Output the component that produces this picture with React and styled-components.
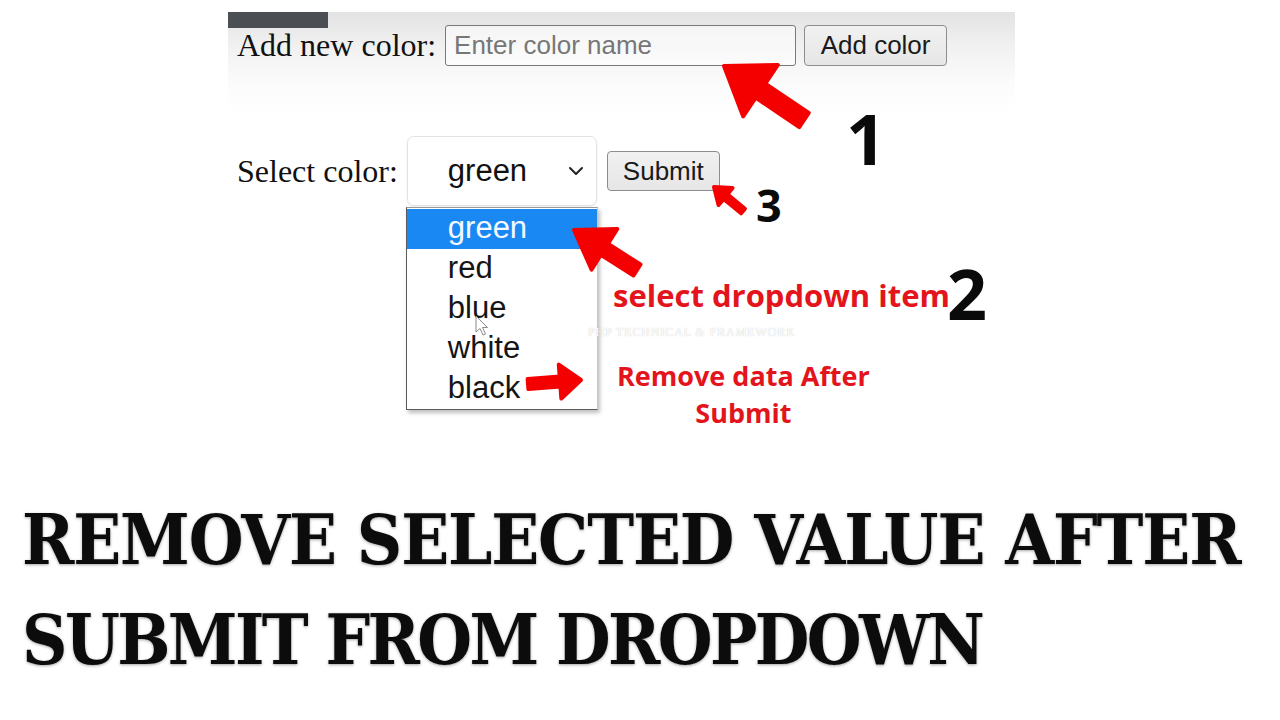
import React from "react";
import styled, { createGlobalStyle } from "styled-components";

const Global = createGlobalStyle`
  html, body { margin: 0; padding: 0; background: #fff; }
  body { width: 1280px; height: 720px; overflow: hidden; }
`;

const Page = styled.div`
  position: relative;
  width: 1280px;
  height: 720px;
  display: flex;
  flex-direction: column;
`;

const Screen = styled.div`
  position: relative;
  margin: 12px 0 0 228px;
  width: 787px;
  height: 414px;
  background: linear-gradient(180deg, #e3e3e3 0px, #f1f1f1 35px, #fbfbfb 70px, #fff 100px);
  box-sizing: border-box;
  padding: 13px 0 0 9px;
  display: flex;
  flex-direction: column;
`;

const TabBar = styled.div`
  position: absolute;
  left: 0;
  top: 0;
  width: 100px;
  height: 16px;
  background: #4b4e53;
`;

const Row = styled.div`
  display: flex;
  align-items: center;
  margin-top: ${(p) => p.$mt || 0}px;
`;

const Label = styled.span`
  font-family: "Liberation Serif", "Times New Roman", serif;
  font-size: 32px;
  color: #111;
  margin-right: ${(p) => p.$gap}px;
  white-space: nowrap;
`;

const TextInput = styled.input`
  box-sizing: border-box;
  width: 351px;
  height: 41px;
  border: 1px solid #7a7a7a;
  border-radius: 3px;
  background: rgba(255, 255, 255, 0.55);
  padding: 0 8px;
  font-family: "Liberation Sans", Arial, sans-serif;
  font-size: 26px;
  color: #111;
  outline: none;
  &::placeholder { color: #777; }
`;

const Button = styled.button`
  box-sizing: border-box;
  width: ${(p) => p.$w}px;
  height: ${(p) => p.$h}px;
  margin-left: ${(p) => p.$ml}px;
  border: 1px solid #8d8d8d;
  border-radius: 4px;
  background: linear-gradient(#f1f1f1, #e6e6e6);
  font-family: "Liberation Sans", Arial, sans-serif;
  font-size: 26px;
  color: #1a1a1a;
  padding: 0;
`;

const SelectWrap = styled.div`
  position: relative;
  width: 190px;
  height: 70px;
`;

const SelectBox = styled.div`
  box-sizing: border-box;
  width: 100%;
  height: 100%;
  border: 1px solid #e2e2e2;
  border-radius: 7px;
  background: #fff;
  box-shadow: 0 1px 3px rgba(0, 0, 0, 0.06);
  display: flex;
  align-items: center;
  padding: 0 12px 0 40px;
  font-family: "Liberation Sans", Arial, sans-serif;
  font-size: 31px;
  color: #111;
`;

const SelectValue = styled.span`
  flex: 1;
`;

const Menu = styled.ul`
  position: absolute;
  left: -1px;
  top: 71px;
  width: 192px;
  margin: 0;
  padding: 1px 0 0;
  list-style: none;
  background: #fff;
  border: 1px solid #5c5c5c;
  border-top-color: #9a9a9a;
  border-right-color: #c8c8c8;
  box-sizing: border-box;
  box-shadow: 2px 3px 4px rgba(0, 0, 0, 0.25);
`;

const Option = styled.li`
  height: 40px;
  line-height: 38px;
  padding-left: 41px;
  font-family: "Liberation Sans", Arial, sans-serif;
  font-size: 31px;
  color: ${(p) => (p.$active ? "#f4f8ff" : "#151515")};
  background: ${(p) => (p.$active ? "#1a88f3" : "transparent")};
`;

const Overlay = styled.svg`
  position: absolute;
  left: 0;
  top: 0;
  pointer-events: none;
`;

const Note = styled.div`
  position: absolute;
  left: ${(p) => p.$x}px;
  top: ${(p) => p.$y}px;
  font-family: "Open Sans", "Noto Sans", sans-serif;
  font-weight: 700;
  font-size: ${(p) => p.$size}px;
  line-height: ${(p) => p.$lh || 1.2};
  color: ${(p) => p.$color};
  text-align: center;
  white-space: nowrap;
`;

const Watermark = styled.div`
  position: absolute;
  left: 588px;
  top: 325px;
  font-family: "Liberation Serif", serif;
  font-size: 12px;
  letter-spacing: 0.9px;
  color: #fff;
  text-shadow: 0 0 1px rgba(120, 120, 120, 0.5);
  white-space: nowrap;
`;

const Title = styled.h1`
  margin: 64px 0 0 22px;
  font-family: "DejaVu Serif Condensed", "DejaVu Serif", serif;
  font-stretch: condensed;
  font-weight: 700;
  font-size: 70px;
  line-height: 100px;
  color: #0c0c0c;
  text-shadow: 0 1px 3px rgba(0, 0, 0, 0.35);
  white-space: nowrap;
  display: flex;
  flex-direction: column;
`;

const TitleLine = styled.span`
  letter-spacing: ${(p) => p.$ls}px;
`;

function arrowPoints(tail, tip, w, hw, hl) {
  const dx = tip[0] - tail[0];
  const dy = tip[1] - tail[1];
  const len = Math.hypot(dx, dy);
  const ux = dx / len, uy = dy / len;
  const nx = -uy, ny = ux;
  const bx = tip[0] - ux * hl, by = tip[1] - uy * hl;
  const pts = [
    [tail[0] + nx * w / 2, tail[1] + ny * w / 2],
    [bx + nx * w / 2, by + ny * w / 2],
    [bx + nx * hw / 2, by + ny * hw / 2],
    tip,
    [bx - nx * hw / 2, by - ny * hw / 2],
    [bx - nx * w / 2, by - ny * w / 2],
    [tail[0] - nx * w / 2, tail[1] - ny * w / 2],
  ];
  return pts.map((p) => p.join(",")).join(" ");
}

const arrows = [
  { tail: [804, 120], tip: [724, 66], w: 17, hw: 62, hl: 44 },
  { tail: [637, 270], tip: [574, 230], w: 13, hw: 48, hl: 36 },
  { tail: [743, 211], tip: [714, 187], w: 6, hw: 22, hl: 15 },
  { tail: [528, 384], tip: [581, 380], w: 10, hw: 34, hl: 21 },
];

export default function App() {
  return (
    <Page>
      <Global />
      <Screen>
        <TabBar />
        <Row>
          <Label $gap={9}>Add new color:</Label>
          <TextInput placeholder="Enter color name" />
          <Button $w={143} $h={41} $ml={8}>Add color</Button>
        </Row>
        <Row $mt={70}>
          <Label $gap={9}>Select color:</Label>
          <SelectWrap>
            <SelectBox>
              <SelectValue>green</SelectValue>
              <svg width="16" height="10" viewBox="0 0 16 10">
                <path d="M2 2 L8 8 L14 2" fill="none" stroke="#222" strokeWidth="2" strokeLinecap="round" strokeLinejoin="round" />
              </svg>
            </SelectBox>
            <Menu>
              <Option $active>green</Option>
              <Option>red</Option>
              <Option>blue</Option>
              <Option>white</Option>
              <Option>black</Option>
            </Menu>
          </SelectWrap>
          <Button $w={113} $h={40} $ml={10}>Submit</Button>
        </Row>
      </Screen>

      <Title>
        <TitleLine $ls={-1.1}>REMOVE SELECTED VALUE AFTER</TitleLine>
        <TitleLine $ls={-2.6}>SUBMIT FROM DROPDOWN</TitleLine>
      </Title>

      <Watermark>PHP TECHNICAL &amp; FRAMEWORK</Watermark>
      <Note $x={613} $y={277} $size={31} $color="#e3141b">select dropdown item</Note>
      <Note $x={617} $y={357} $size={27} $lh={1.37} $color="#e3141b">
        Remove data After
        <br />
        Submit
      </Note>
      <Note $x={846} $y={96} $size={70} $color="#0a0a0a">1</Note>
      <Note $x={947} $y={251} $size={70} $color="#0a0a0a">2</Note>
      <Note $x={756} $y={178} $size={45} $color="#0a0a0a">3</Note>

      <Overlay width="1280" height="720" viewBox="0 0 1280 720">
        {arrows.map((a, i) => (
          <polygon
            key={i}
            points={arrowPoints(a.tail, a.tip, a.w, a.hw, a.hl)}
            fill="#f40000"
            stroke="#f40000"
            strokeWidth="4"
            strokeLinejoin="round"
          />
        ))}
        <path
          d="M476 316 L476 332 L480 328.5 L483 335 L485.5 334 L482.5 327.5 L487.5 327.5 Z"
          fill="#fff"
          stroke="#8a8a8a"
          strokeWidth="1"
          strokeLinejoin="round"
        />
      </Overlay>
    </Page>
  );
}
